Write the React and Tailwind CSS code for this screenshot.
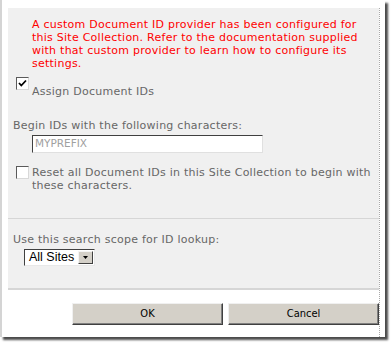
import React from "react";

const verdana = { fontFamily: '"DejaVu Sans", Verdana, sans-serif' };

function CheckBox({ checked }) {
  return (
    <div className="w-[13px] h-[13px] shrink-0 bg-white border border-t-[#5a5a5a] border-l-[#5a5a5a] border-b-[#d8d8d8] border-r-[#d8d8d8] flex items-center justify-center">
      {checked && (
        <svg width="9" height="9" viewBox="0 0 9 9">
          <path d="M1 4 L3.3 6.5 L8 1.5" stroke="#000" strokeWidth="1.8" fill="none" />
        </svg>
      )}
    </div>
  );
}

export default function App() {
  return (
    <div className="w-[392px] h-[343px] bg-white" style={verdana}>
      <div className="w-[385px] h-[337px] bg-white border-l-2 border-[#d4d4d4] shadow-[3px_3px_2px_rgba(0,0,0,0.7)] pl-[6px] pt-[8px]">
        <div className="w-[372px] h-[329px] border-r border-dotted border-[#a8a8a8] flex flex-col">
          {/* settings panel */}
          <div className="bg-[#f0f0f0] border-b-2 border-[#d6d6d6] tracking-[0.25px]">
            <div className="h-[211px] border-b border-[#d6d6d6] pt-[10px]">
              <p className="ml-[24px] w-[336px] text-[11px] leading-[13px] text-[#ff0000]">
                A custom Document ID provider has been configured for this Site Collection. Refer to the documentation supplied with that custom provider to learn how to configure its settings.
              </p>
              <div className="ml-[8px] mt-[7px]">
                <CheckBox checked />
              </div>
              <div className="ml-[24px] -mt-[5px] text-[11px] leading-[13px] text-[#676767]">Assign Document IDs</div>
              <div className="ml-[5px] mt-[21px] text-[11px] leading-[13px] text-[#676767]">Begin IDs with the following characters:</div>
              <div className="ml-[24px] mt-[3px] w-[231px] h-[18px] bg-white border border-t-[#404040] border-l-[#404040] border-b-[#e0e0e0] border-r-[#e0e0e0] pl-[2px] flex items-center text-[10.5px] tracking-normal text-[#a0a0a0]">
                MYPREFIX
              </div>
              <div className="ml-[8px] mt-[13px] flex gap-[3px]">
                <CheckBox />
                <div className="text-[11px] leading-[13px] text-[#676767] w-[348px]">
                  Reset all Document IDs in this Site Collection to begin with these characters.
                </div>
              </div>
            </div>
            <div className="h-[69px] pt-[14px]">
              <div className="ml-[5px] text-[11px] leading-[13px] text-[#676767]">Use this search scope for ID lookup:</div>
              <div className="ml-[16px] mt-[3px] w-[71px] h-[17px] bg-white border border-t-[#404040] border-l-[#404040] border-b-[#e8e8e8] border-r-[#e8e8e8] flex items-center justify-between pl-[4px] pr-[1px] tracking-normal">
                <span className="text-[12.5px] leading-none text-black" style={{ fontFamily: '"Liberation Sans", Arial, sans-serif' }}>All Sites</span>
                <span className="w-[15px] h-[13px] bg-[#d4d0c8] border border-t-[#f4f4f4] border-l-[#f4f4f4] border-b-[#404040] border-r-[#404040] flex items-center justify-center">
                  <svg width="5" height="3" viewBox="0 0 5 3"><path d="M0 0 H5 L2.5 3 Z" fill="#000" /></svg>
                </span>
              </div>
            </div>
          </div>
          {/* buttons */}
          <div className="flex justify-end gap-[5px] mt-[13px]">
            {["OK", "Cancel"].map((label) => (
              <button
                key={label}
                className="w-[151px] h-[22px] bg-[#d4d0c8] border border-t-[#f0f0f0] border-l-[#f0f0f0] border-b-[#404040] border-r-[#404040] shadow-[inset_-1px_-1px_0_#808080] text-[11px] text-black"
                style={{ fontFamily: '"DejaVu Sans Condensed", Tahoma, sans-serif' }}
              >
                {label}
              </button>
            ))}
          </div>
        </div>
      </div>
    </div>
  );
}
